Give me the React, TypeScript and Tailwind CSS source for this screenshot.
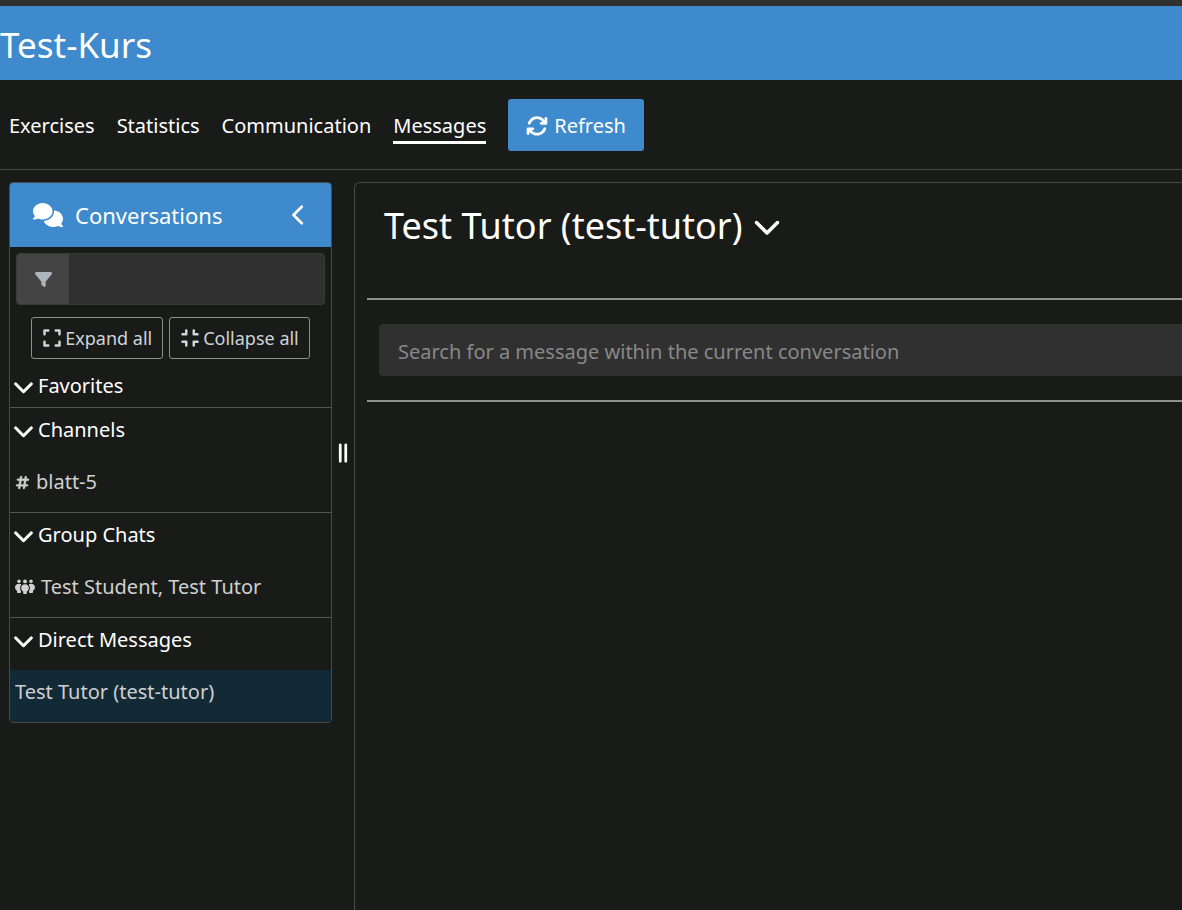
import type { ReactNode } from "react";
import {
  FaArrowsRotate,
  FaChevronDown,
  FaChevronLeft,
  FaComments,
  FaCompress,
  FaExpand,
  FaFilter,
  FaGripLinesVertical,
  FaHashtag,
} from "react-icons/fa6";

const tabs = [
  { label: "Exercises", active: false },
  { label: "Statistics", active: false },
  { label: "Communication", active: false },
  { label: "Messages", active: true },
];

function GroupIcon() {
  return (
    <svg width="20" height="20" viewBox="0 0 640 512" fill="currentColor" aria-hidden="true">
      <circle cx="128" cy="72" r="56" />
      <circle cx="512" cy="72" r="56" />
      <circle cx="320" cy="76" r="62" />
      <path d="M128 152c32 0 58 8 76 22-26 32-40 72-40 112 0 48 16 88 28 106v24c0 18-14 32-32 32H96c-18 0-32-14-32-32v-38C24 356 0 312 0 266c0-66 56-114 128-114z" />
      <path d="M512 152c-32 0-58 8-76 22 26 32 40 72 40 112 0 48-16 88-28 106v24c0 18 14 32 32 32h64c18 0 32-14 32-32v-38c40-22 64-66 64-112 0-66-56-114-128-114z" />
      <path d="M320 166c70 0 124 52 124 120 0 50-26 92-66 114v48c0 18-14 32-32 32h-52c-18 0-32-14-32-32v-48c-40-22-66-64-66-114 0-68 54-120 124-120z" />
    </svg>
  );
}

function Section({ title, children }: { title: string; children?: ReactNode }) {
  return (
    <section className="border-b border-[#555] last:border-b-0">
      <button type="button" className="flex h-[43px] w-full items-center gap-1 pt-px pl-[3px] text-white">
        <FaChevronDown size={21} stroke="currentColor" strokeWidth={12} />
        <span>{title}</span>
      </button>
      {children && <div className="pt-[9px]">{children}</div>}
    </section>
  );
}

function Conversation({ icon, name, active }: { icon?: ReactNode; name: string; active?: boolean }) {
  return (
    <a
      href="#"
      className={`flex h-[52px] items-center gap-1.5 pb-2 pl-[5px] text-[#d0d0d0] ${active ? "bg-[#122a36]" : ""}`}
    >
      {icon}
      <span>{name}</span>
    </a>
  );
}

export default function App() {
  return (
    <div className="flex min-h-screen flex-col overflow-hidden bg-[#191b18] font-['Noto_Sans',sans-serif] text-[20px] leading-8 text-white">
      <div className="h-1.5 bg-[#303030]" />
      <header className="flex h-[74px] items-center bg-[#3e8acc]">
        <h1 className="pt-1 text-[35px] leading-[44px]">Test-Kurs</h1>
      </header>

      <nav className="flex h-[90px] items-center border-b border-[#4a4a4a] pl-[9px]">
        <div className="flex gap-[22px]">
          {tabs.map((tab) => (
            <a
              key={tab.label}
              href="#"
              className={`border-b-3 pt-1 leading-[31px] ${tab.active ? "border-white" : "border-transparent"}`}
            >
              {tab.label}
            </a>
          ))}
        </div>
        <button type="button" className="ml-[22px] flex h-[52px] items-center gap-1.5 rounded-[3px] bg-[#3e8acc] px-[18px] pt-0.5">
          <FaArrowsRotate size={22} />
          Refresh
        </button>
      </nav>

      <main className="flex flex-1 items-start pt-3 pl-[9px]">
        <div className="flex shrink-0">
          <aside className="w-[323px] overflow-hidden rounded-[4px] border border-[#4a4a4a]">
            <div className="flex h-16 items-center bg-[#3e8acc] pr-[21px] pl-[23px]">
              <FaComments size={30} />
              <h2 className="ml-3 flex-1 text-[22px]">Conversations</h2>
              <button type="button" aria-label="Hide conversations">
                <FaChevronLeft size={22} />
              </button>
            </div>

            <div className="mx-1.5 mt-1.5 flex h-[52px] overflow-hidden rounded-[4px] border border-[#3a3a3a] bg-[#303030]">
              <label htmlFor="filter" className="flex w-[52px] items-center justify-center bg-[#444] text-[#adb5bd]">
                <FaFilter size={17} />
              </label>
              <input id="filter" type="text" aria-label="Filter" className="min-w-0 flex-1 px-4 outline-none" />
            </div>

            <div className="mt-3 mb-[5px] flex justify-center gap-1.5 text-[18px] text-[#ced4da]">
              <button type="button" className="flex h-[42px] items-center gap-[3px] rounded-[3px] border border-[#8d8f8c] px-2.5">
                <FaExpand size={20} />
                Expand all
              </button>
              <button type="button" className="flex h-[42px] items-center gap-[3px] rounded-[3px] border border-[#8d8f8c] px-2.5">
                <FaCompress size={20} />
                Collapse all
              </button>
            </div>

            <Section title="Favorites" />
            <Section title="Channels">
              <Conversation icon={<FaHashtag size={15} stroke="currentColor" strokeWidth={14} />} name="blatt-5" />
            </Section>
            <Section title="Group Chats">
              <Conversation icon={<GroupIcon />} name="Test Student, Test Tutor" />
            </Section>
            <Section title="Direct Messages">
              <Conversation name="Test Tutor (test-tutor)" active />
            </Section>
          </aside>
          <div className="flex w-[22px] cursor-col-resize items-center justify-center">
            <FaGripLinesVertical size={22} />
          </div>
        </div>

        <section className="min-w-0 flex-1 self-stretch rounded-tl-[6px] border-t border-l border-[#4a4a4a] pl-3">
          <div className="flex h-[115px] items-start pt-5 pl-[17px]">
            <button type="button" className="flex items-center gap-2.5 text-[36px] leading-[46px]">
              Test Tutor (test-tutor)
              <FaChevronDown size={28} />
            </button>
          </div>
          <div className="border-y-2 border-[#8f918e] py-6 pl-3">
            <input
              type="text"
              aria-label="Search messages"
              placeholder="Search for a message within the current conversation"
              className="block h-[52px] w-full rounded-l-[4px] bg-[#303030] px-[19px] pt-0.5 outline-none placeholder:text-[#888]"
            />
          </div>
        </section>
      </main>
    </div>
  );
}
